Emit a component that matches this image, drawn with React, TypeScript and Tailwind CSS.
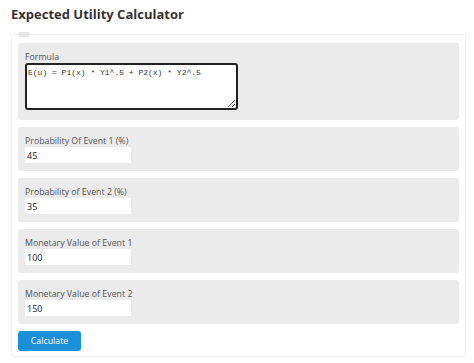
import React from 'react';

const fields = [
  { label: 'Probability Of Event 1 (%)', value: '45' },
  { label: 'Probability of Event 2 (%)', value: '35' },
  { label: 'Monetary Value of Event 1', value: '100' },
  { label: 'Monetary Value of Event 2', value: '150' },
];

export default function App() {
  return (
    <div className="w-[474px] h-[363px] bg-white font-['Open_Sans',sans-serif] overflow-hidden">
      <h1 className="pl-[11px] pt-[6px] text-[13px] font-bold leading-[16px] text-[#333]">
        Expected Utility Calculator
      </h1>
      <div className="relative ml-[11px] mt-[12px] w-[455px] border border-[#efefef] rounded-[3px] px-[6px] pt-[8px] pb-[5px]">
        <div className="absolute left-[6px] -top-[3px] w-[12px] h-[5px] rounded-full bg-[#e6e6e6]" />
        <div className="flex flex-col gap-[7px]">
          <div className="bg-[#ebebeb] rounded-[3px] px-[7px] pt-[9px] pb-[10px]">
            <div className="text-[8.8px] leading-[10px] text-[#555] mb-[1px]">Formula</div>
            <textarea
              defaultValue="E(u) = P1(x) * Y1^.5 + P2(x) * Y2^.5"
              className="block w-[213px] h-[47px] border-2 border-[#222] rounded-[3px] bg-white px-[1px] pt-[2px] font-['Liberation_Mono',monospace] text-[8px] leading-[11px] text-[#333] resize-y outline-none"
            />
          </div>
          {fields.map((f) => (
            <div key={f.label} className="bg-[#ebebeb] rounded-[3px] h-[44px] px-[7px] pt-[9px]">
              <div className="text-[8.8px] leading-[10px] text-[#555] mb-[1px]">{f.label}</div>
              <input
                defaultValue={f.value}
                className="block w-[106px] h-[16px] bg-white px-[2px] font-['Open_Sans',sans-serif] text-[9px] text-[#222] outline-none"
              />
            </div>
          ))}
          <button className="block w-[63px] h-[20px] rounded-[3px] bg-[#1b8fd8] text-white text-[8.8px] leading-[20px]">
            Calculate
          </button>
        </div>
      </div>
    </div>
  );
}
